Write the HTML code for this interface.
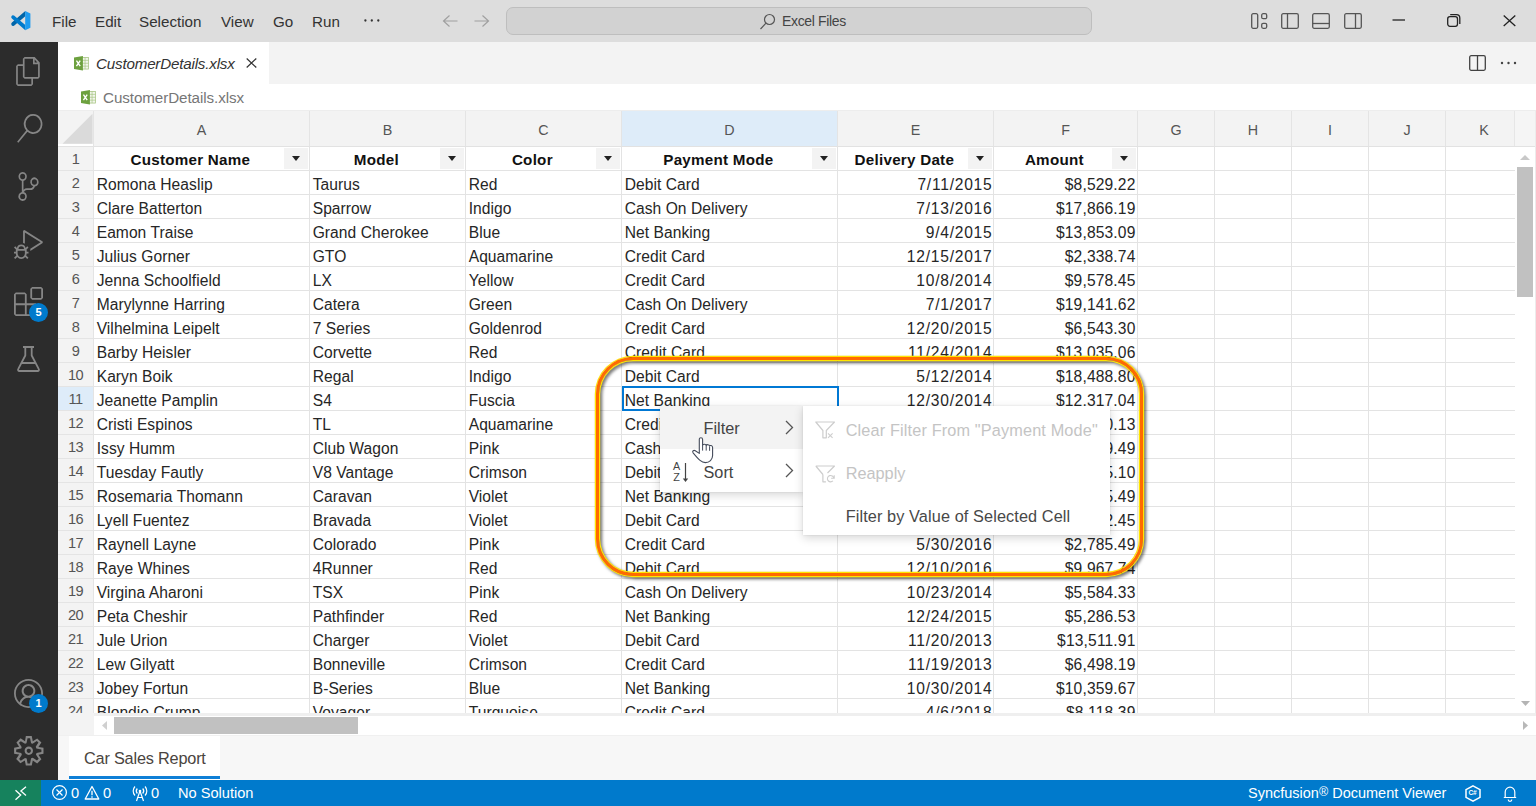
<!DOCTYPE html>
<html lang="en">
<head>
<meta charset="utf-8">
<title>CustomerDetails.xlsx - Excel Files</title>
<style>
*{box-sizing:border-box;margin:0;padding:0}
html,body{width:1536px;height:806px;overflow:hidden;background:#fff}
body{position:relative;font-family:"Liberation Sans",sans-serif;color:#333;-webkit-font-smoothing:antialiased}
.abs{position:absolute}
svg{display:block;position:absolute;overflow:visible}
/* title bar */
#title{position:absolute;left:0;top:0;width:1536px;height:42px;background:#dddddd}
#title .m{position:absolute;top:1px;height:42px;line-height:42px;font-size:15.2px;color:#333;white-space:nowrap}
#cc{position:absolute;left:506px;top:7px;width:586px;height:28px;border-radius:7px;background:#d2d2d2;border:1px solid #bebebe}
#cc span{position:absolute;left:275px;top:0;line-height:26px;font-size:14px;letter-spacing:-.35px;color:#444;white-space:nowrap}
/* activity bar */
#act{position:absolute;left:0;top:42px;width:58px;height:738px;background:#2c2c2c}
.badge{position:absolute;width:19px;height:19px;border-radius:50%;background:#007acc;color:#fff;font-size:11px;font-weight:bold;text-align:center;line-height:19px}
/* tabs */
#tabs{position:absolute;left:58px;top:42px;width:1478px;height:42px;background:#f3f3f3}
#tab{position:absolute;left:0;top:0;width:211px;height:42px;background:#fff}
#tab .t{position:absolute;left:38px;top:1px;line-height:42px;font-size:15.2px;font-style:italic;letter-spacing:-.2px;color:#333;white-space:nowrap}
#bc{position:absolute;left:58px;top:84px;width:1478px;height:26px;background:#fff}
#bc .t{position:absolute;left:45px;top:0;line-height:27px;font-size:15.2px;letter-spacing:-.08px;color:#767676;white-space:nowrap}
/* grid */
#grid{position:absolute;left:58px;top:110px;width:1478px;height:625px;background:#fff;overflow:hidden}
.colhdr{position:absolute;left:0;top:0;width:1478px;height:37px;background:#f5f5f5;border-bottom:1px solid #e2e2e2}
.chw{position:absolute;left:0;top:0;width:1457px;height:36px;overflow:hidden;border-right:1px solid #e6e6e6}
.ch{position:absolute;top:0;height:36px;line-height:40.500px;text-align:center;font-size:14.3px;color:#555;border-right:1px solid #e4e4e4;background:#f3f3f3}
.ch.sel{background:#deecf9}
.rows{position:absolute;left:0;top:0;width:1457px;height:603px;overflow:hidden}
.row{position:absolute;left:0;width:1457px;height:24px}
.rh{position:absolute;left:0;top:0;width:36px;height:24px;background:#f3f3f3;border-right:1px solid #e4e4e4;border-bottom:1px solid #e4e4e4;text-align:center;font-size:14.600px;line-height:25px;color:#555;letter-spacing:-.5px}
.rh.sel{background:#deecf9}
.c{position:absolute;top:0;height:24px;border-right:1px solid #e3e3e3;border-bottom:1px solid #e3e3e3;font-size:15.600px;line-height:27.500px;padding:0 3px 0 2.700px;white-space:nowrap;overflow:hidden;color:#262626;letter-spacing:.05px}
.c.r{text-align:right;padding-right:1.500px;letter-spacing:.15px}
.c.d{text-align:right;padding-right:.6px;letter-spacing:.75px}
.c.hd{line-height:25px;font-weight:bold;text-align:center;padding-right:25px;color:#111;letter-spacing:.25px;font-size:15.2px}
.fb{position:absolute;right:1px;top:1px;width:24px;height:21px;background:#f3f3f3}
.fb:after{content:"";position:absolute;left:7.500px;top:8px;border-left:4.500px solid transparent;border-right:4.500px solid transparent;border-top:5.500px solid #222}

</style>
</head>
<body>
<!-- TITLE BAR -->
<div id="title">
  <svg style="left:0;top:0" width="42" height="42" viewBox="0 0 42 42"><path d="M25.300 10.900V16.200L14 25.650Q12.500 26.600 11.600 25.300 10.600 23.900 11.900 22.600z" fill="#0065a9"/><path d="M25.300 30.300V25L14 15.550Q12.500 14.600 11.600 15.900 10.600 17.300 11.900 18.600z" fill="#007acc"/><path d="M25.200 10.900 30.400 13.400V27.700L25.200 30.300z" fill="#1f9cf0"/></svg>
  <div class="m" style="left:52px">File</div>
  <div class="m" style="left:95px">Edit</div>
  <div class="m" style="left:139px">Selection</div>
  <div class="m" style="left:221px">View</div>
  <div class="m" style="left:273px">Go</div>
  <div class="m" style="left:312px">Run</div>
  <svg style="left:363px;top:18px" width="18" height="5" viewBox="0 0 18 5"><circle cx="2.400" cy="2.500" r="1.150" fill="#333"/><circle cx="8.800" cy="2.500" r="1.150" fill="#333"/><circle cx="15.300" cy="2.500" r="1.150" fill="#333"/></svg>
  <svg style="left:442px;top:14px" width="16" height="14" viewBox="0 0 16 14"><path d="M7.500 1.500 1.500 7l6 5.500M1.500 7h14" fill="none" stroke="#a0a0a0" stroke-width="1.200"/></svg>
  <svg style="left:474px;top:14px" width="16" height="14" viewBox="0 0 16 14"><path d="M8.500 1.500 14.500 7l-6 5.500M14.500 7H.5" fill="none" stroke="#a0a0a0" stroke-width="1.200"/></svg>
  <div id="cc">
    <svg style="left:252px;top:5px" width="17" height="17" viewBox="0 0 17 17"><circle cx="10.500" cy="6.500" r="5" fill="none" stroke="#555" stroke-width="1.200"/><path d="M7 10.200 1.500 16" stroke="#555" stroke-width="1.200" fill="none"/></svg>
    <span>Excel Files</span>
  </div>
  <!-- layout icons -->
  <svg style="left:1251px;top:13px" width="17" height="16" viewBox="0 0 17 16"><rect x=".7" y=".7" width="6" height="14.600" rx="1.500" fill="none" stroke="#555" stroke-width="1.300"/><rect x="10.700" y=".7" width="5" height="5" rx="1.500" fill="none" stroke="#555" stroke-width="1.300"/><rect x="10.700" y="10.300" width="5" height="5" rx="1.500" fill="none" stroke="#555" stroke-width="1.300"/></svg>
  <svg style="left:1281px;top:13px" width="18" height="16" viewBox="0 0 18 16"><rect x=".7" y=".7" width="16.600" height="14.600" rx="1.500" fill="none" stroke="#555" stroke-width="1.300"/><path d="M6.500.7v14.600" stroke="#555" stroke-width="1.300"/></svg>
  <svg style="left:1312px;top:13px" width="18" height="16" viewBox="0 0 18 16"><rect x=".7" y=".7" width="16.600" height="14.600" rx="1.500" fill="none" stroke="#555" stroke-width="1.300"/><path d="M.7 10.500h16.600" stroke="#555" stroke-width="1.300"/></svg>
  <svg style="left:1344px;top:13px" width="18" height="16" viewBox="0 0 18 16"><rect x=".7" y=".7" width="16.600" height="14.600" rx="1.500" fill="none" stroke="#555" stroke-width="1.300"/><path d="M11.500.7v14.600" stroke="#555" stroke-width="1.300"/></svg>
  <!-- window controls -->
  <svg style="left:1392px;top:19px" width="14" height="2" viewBox="0 0 14 2"><path d="M.5 1h12.500" stroke="#222" stroke-width="1.300"/></svg>
  <svg style="left:1447px;top:14px" width="14" height="13" viewBox="0 0 14 13"><rect x=".7" y="2.700" width="9.800" height="9.600" rx="2.200" fill="none" stroke="#222" stroke-width="1.300"/><path d="M3.200.7h6.300a3.300 3.300 0 0 1 3.300 3.300v6" fill="none" stroke="#222" stroke-width="1.300"/></svg>
  <svg style="left:1503px;top:15px" width="13" height="12" viewBox="0 0 13 12"><path d="M.7.5 12.300 11M12.300.5.7 11" stroke="#222" stroke-width="1.300" fill="none"/></svg>
</div>

<!-- ACTIVITY BAR -->
<div id="act">
<svg style="left:15px;top:15px" width="27" height="29" viewBox="0 0 24 24" preserveAspectRatio="none"><path fill="#868686" d="M17.500 0h-9L7 1.500V6H2.500L1 7.500v15.070L2.500 24h12.070L16 22.570V18h4.700l1.300-1.430V4.500L17.500 0zm0 2.120l2.380 2.380H17.500V2.120zm-3 20.380h-12v-15H7v9.070L8.500 18h6v4.500zm6-6h-12v-15H16V6h4.500v10.500z"/></svg>
<svg style="left:16px;top:72px" width="27" height="29" viewBox="0 0 24 24" preserveAspectRatio="none"><path fill="#868686" d="M15.250 0a8.250 8.250 0 0 0-6.180 13.720L1 22.880l1.120 1 8.050-9.120A8.251 8.251 0 1 0 15.250.01V0zm0 15a6.750 6.750 0 1 1 0-13.500 6.750 6.750 0 0 1 0 13.500z"/></svg>
<svg style="left:15px;top:130px" width="27" height="29" viewBox="0 0 24 24" preserveAspectRatio="none"><path fill="#868686" d="M21.007 8.222A3.738 3.738 0 0 0 15.045 5.200a3.737 3.737 0 0 0 1.156 6.583 2.988 2.988 0 0 1-2.668 1.670h-2.990a4.456 4.456 0 0 0-2.989 1.165V7.400a3.737 3.737 0 1 0-1.494 0v9.117a3.776 3.776 0 1 0 1.816.099 2.990 2.990 0 0 1 2.668-1.667h2.990a4.484 4.484 0 0 0 4.223-3.039 3.736 3.736 0 0 0 3.250-3.687zM4.565 3.738a2.242 2.242 0 1 1 4.484 0 2.242 2.242 0 0 1-4.484 0zm4.484 16.441a2.242 2.242 0 1 1-4.484 0 2.242 2.242 0 0 1 4.484 0zm8.221-9.715a2.242 2.242 0 1 1 0-4.485 2.242 2.242 0 0 1 0 4.485z"/></svg>
<svg style="left:14px;top:188px" width="29" height="29" viewBox="0 0 24 24" preserveAspectRatio="none"><path fill="#868686" d="M10.940 13.500l-1.320 1.320a3.730 3.730 0 0 0-7.240 0L1.060 13.500 0 14.560l1.720 1.720-.22.22V18H0v1.500h1.500v.08c.077.489.214.966.41 1.420L0 22.940 1.060 24l1.650-1.650A4.308 4.308 0 0 0 6 24a4.310 4.310 0 0 0 3.290-1.650L10.940 24 12 22.940 10.090 21c.198-.464.336-.951.41-1.450v-.1H12V18h-1.500v-1.500l-.22-.22L12 14.560l-1.060-1.060zM6 13.500a2.250 2.250 0 0 1 2.250 2.250h-4.500A2.250 2.250 0 0 1 6 13.500zm3 6a3.330 3.330 0 0 1-3 3 3.330 3.330 0 0 1-3-3v-2.250h6v2.250zm14.760-9.900v1.260L13.500 17.370V15.600l8.500-5.370L9 2v9.460a5.070 5.070 0 0 0-1.500-.72V.63L8.640 0l15.120 9.600z"/></svg>
<svg style="left:14px;top:245px" width="29" height="29" viewBox="0 0 24 24" preserveAspectRatio="none"><path fill="#868686" d="M13.500 1.500L15 0h7.500L24 1.500V9l-1.500 1.500H15L13.500 9V1.500zm1.500 0V9h7.500V1.500H15zM0 15V6l1.500-1.500H9L10.500 6v7.500H18l1.500 1.500v7.500L18 24H1.500L0 22.500V15zm9-1.500V6H1.500v7.500H9zM9 15H1.500v7.500H9V15zm1.500 7.500H18V15h-7.500v7.500z"/></svg>
<div class="badge" style="left:29px;top:261px">5</div>
<svg style="left:17px;top:304px" width="23" height="26" viewBox="0 0 23 26"><path fill="none" stroke="#868686" stroke-width="1.800" stroke-linejoin="round" d="M6 1h11M8.300 1v8.500L1.200 23.200a1.200 1.200 0 0 0 1.100 1.800h18.400a1.200 1.200 0 0 0 1.100-1.800L14.700 9.500V1M4.500 17h14"/></svg>
<svg style="left:14px;top:637px" width="29" height="29" viewBox="0 0 16 16"><path fill="#868686" d="M16 7.992C16 3.580 12.416 0 8 0S0 3.580 0 7.992c0 2.430 1.104 4.620 2.832 6.090.016.016.032.016.032.032.144.112.288.224.448.336.080.048.144.111.224.175A7.980 7.980 0 0 0 8.016 16a7.980 7.980 0 0 0 4.480-1.375c.080-.048.144-.111.224-.160.144-.111.304-.223.448-.335.016-.016.032-.016.032-.032 1.696-1.487 2.800-3.676 2.800-6.106zm-8 7.001c-1.504 0-2.880-.480-4.016-1.279.016-.128.048-.255.080-.383a4.170 4.170 0 0 1 .416-.991c.176-.304.384-.576.640-.816.240-.240.528-.463.816-.639.304-.176.624-.304.976-.400A4.150 4.150 0 0 1 8 10.342a4.185 4.185 0 0 1 2.928 1.166c.368.368.656.800.864 1.295.112.288.192.592.240.911A7.030 7.030 0 0 1 8 14.993zm-2.448-7.400a2.490 2.490 0 0 1-.208-1.024c0-.351.064-.703.208-1.023.144-.320.336-.607.576-.847.240-.240.528-.431.848-.575.320-.144.672-.208 1.024-.208.368 0 .704.064 1.024.208.320.144.608.336.848.575.240.240.432.528.576.847.144.320.208.672.208 1.023 0 .368-.064.704-.208 1.023a2.840 2.840 0 0 1-.576.848 2.840 2.840 0 0 1-.848.575 2.715 2.715 0 0 1-2.064 0 2.840 2.840 0 0 1-.848-.575 2.526 2.526 0 0 1-.560-.848zm7.424 5.306c0-.032-.016-.048-.016-.080a5.220 5.220 0 0 0-.688-1.406 4.883 4.883 0 0 0-1.088-1.135 5.207 5.207 0 0 0-1.040-.608 2.820 2.820 0 0 0 .464-.383 4.200 4.200 0 0 0 .624-.784 3.624 3.624 0 0 0 .528-1.934 3.710 3.710 0 0 0-.288-1.470 3.799 3.799 0 0 0-.816-1.199 3.845 3.845 0 0 0-1.200-.800 3.720 3.720 0 0 0-1.472-.287 3.720 3.720 0 0 0-1.472.288 3.631 3.631 0 0 0-1.200.815 3.840 3.840 0 0 0-.800 1.199 3.710 3.710 0 0 0-.288 1.470c0 .352.048.688.144 1.007.096.336.224.640.400.927.160.288.384.544.624.784.144.144.304.271.480.383a5.120 5.120 0 0 0-1.040.624c-.416.320-.784.703-1.088 1.119a4.999 4.999 0 0 0-.688 1.406c-.016.032-.016.064-.016.080C1.776 11.636.992 9.910.992 7.992.992 4.140 4.144.991 8 .991s7.008 3.149 7.008 7.001a6.960 6.960 0 0 1-2.032 4.907z"/></svg>
<div class="badge" style="left:29px;top:652px">1</div>
<svg style="left:12.200px;top:692.300px" width="33.600" height="33.600" viewBox="0 0 16 16"><path fill="#868686" fill-rule="evenodd" d="M9.100 4.400L8.600 2H7.400l-.5 2.400-.7.3-2-1.300-.9.800 1.300 2-.2.700-2.400.5v1.200l2.400.5.300.8-1.300 2 .8.800 2-1.300.8.300.4 2.300h1.200l.5-2.400.8-.3 2 1.300.8-.8-1.300-2 .3-.8 2.300-.4V7.400l-2.400-.5-.3-.8 1.300-2-.8-.8-2 1.300-.7-.2zM9.400 1l.5 2.400L12 2.100l2 2-1.400 2.100 2.400.4v2.800l-2.400.5L14 12l-2 2-2.100-1.400-.5 2.400H6.600l-.5-2.400L4 13.900l-2-2 1.400-2.100L1 9.400V6.600l2.400-.5L2.100 4l2-2 2.100 1.400.4-2.400h2.800zm.6 7c0 1.100-.9 2-2 2s-2-.9-2-2 .9-2 2-2 2 .9 2 2zM8 9c.6 0 1-.4 1-1s-.4-1-1-1-1 .4-1 1 .4 1 1 1z"/></svg>

</div>

<!-- TABS -->
<div id="tabs">
  <div id="tab">
    <svg style="left:15.500px;top:14px" width="15" height="14.500" viewBox="0 0 16 15" preserveAspectRatio="none"><rect x="8" y="1.500" width="7.500" height="12" fill="#f2f6ec" stroke="#a5c480" stroke-width=".8"/><path d="M8 4.500h7.500M8 7.500h7.500M8 10.500h7.500M11.800 1.500v12" stroke="#a5c480" stroke-width=".7" fill="none"/><path d="M0 1.600 9.500 0v15L0 13.400z" fill="#6da13f"/><path d="M2.600 4.800 6.600 10.400M6.600 4.800 2.600 10.400" stroke="#fff" stroke-width="1.500" fill="none"/></svg>

    <div class="t">CustomerDetails.xlsx</div>
    <svg style="left:188px;top:16px" width="11" height="10" viewBox="0 0 11 10"><path d="M.7.5 10.300 9.500M10.300.5.7 9.500" stroke="#333" stroke-width="1.200" fill="none"/></svg>
  </div>
  <svg style="left:1411px;top:13px" width="17" height="16" viewBox="0 0 17 16"><rect x=".7" y=".7" width="15.600" height="14.600" rx="1.500" fill="none" stroke="#424242" stroke-width="1.300"/><path d="M8.500.7v14.600" stroke="#424242" stroke-width="1.300"/></svg>
  <svg style="left:1442px;top:19px" width="17" height="4" viewBox="0 0 17 4"><circle cx="2" cy="2" r="1.200" fill="#424242"/><circle cx="8.500" cy="2" r="1.200" fill="#424242"/><circle cx="15" cy="2" r="1.200" fill="#424242"/></svg>
</div>
<div id="bc">
  <svg style="left:23px;top:5.500px" width="15" height="14.500" viewBox="0 0 16 15" preserveAspectRatio="none"><rect x="8" y="1.500" width="7.500" height="12" fill="#f2f6ec" stroke="#a5c480" stroke-width=".8"/><path d="M8 4.500h7.500M8 7.500h7.500M8 10.500h7.500M11.800 1.500v12" stroke="#a5c480" stroke-width=".7" fill="none"/><path d="M0 1.600 9.500 0v15L0 13.400z" fill="#6da13f"/><path d="M2.600 4.800 6.600 10.400M6.600 4.800 2.600 10.400" stroke="#fff" stroke-width="1.500" fill="none"/></svg>

  <div class="t">CustomerDetails.xlsx</div>
</div>

<!-- GRID -->
<div id="grid">
<div class="colhdr"><div class="chw">
<div class="ch" style="left:36px;width:216px">A</div>
<div class="ch" style="left:252px;width:156px">B</div>
<div class="ch" style="left:408px;width:156px">C</div>
<div class="ch sel" style="left:564px;width:216px">D</div>
<div class="ch" style="left:780px;width:156px">E</div>
<div class="ch" style="left:936px;width:144px">F</div>
<div class="ch" style="left:1080px;width:77px">G</div>
<div class="ch" style="left:1157px;width:77px">H</div>
<div class="ch" style="left:1234px;width:77px">I</div>
<div class="ch" style="left:1311px;width:77px">J</div>
<div class="ch" style="left:1388px;width:77px">K</div>
</div></div>
<div class="rows">
<div class="row" style="top:37px">
<div class="rh">1</div>
<div class="c hd" style="left:36px;width:216px"><span>Customer Name</span><i class="fb"></i></div>
<div class="c hd" style="left:252px;width:156px"><span>Model</span><i class="fb"></i></div>
<div class="c hd" style="left:408px;width:156px"><span>Color</span><i class="fb"></i></div>
<div class="c hd" style="left:564px;width:216px"><span>Payment Mode</span><i class="fb"></i></div>
<div class="c hd" style="left:780px;width:156px"><span>Delivery Date</span><i class="fb"></i></div>
<div class="c hd" style="left:936px;width:144px"><span>Amount</span><i class="fb"></i></div>
<div class="c" style="left:1080px;width:77px"></div>
<div class="c" style="left:1157px;width:77px"></div>
<div class="c" style="left:1234px;width:77px"></div>
<div class="c" style="left:1311px;width:77px"></div>
<div class="c" style="left:1388px;width:77px"></div>
</div>
<div class="row" style="top:61px">
<div class="rh">2</div>
<div class="c" style="left:36px;width:216px">Romona Heaslip</div>
<div class="c" style="left:252px;width:156px">Taurus</div>
<div class="c" style="left:408px;width:156px">Red</div>
<div class="c" style="left:564px;width:216px">Debit Card</div>
<div class="c d" style="left:780px;width:156px">7/11/2015</div>
<div class="c r" style="left:936px;width:144px">$8,529.22</div>
<div class="c" style="left:1080px;width:77px"></div>
<div class="c" style="left:1157px;width:77px"></div>
<div class="c" style="left:1234px;width:77px"></div>
<div class="c" style="left:1311px;width:77px"></div>
<div class="c" style="left:1388px;width:77px"></div>
</div>
<div class="row" style="top:85px">
<div class="rh">3</div>
<div class="c" style="left:36px;width:216px">Clare Batterton</div>
<div class="c" style="left:252px;width:156px">Sparrow</div>
<div class="c" style="left:408px;width:156px">Indigo</div>
<div class="c" style="left:564px;width:216px">Cash On Delivery</div>
<div class="c d" style="left:780px;width:156px">7/13/2016</div>
<div class="c r" style="left:936px;width:144px">$17,866.19</div>
<div class="c" style="left:1080px;width:77px"></div>
<div class="c" style="left:1157px;width:77px"></div>
<div class="c" style="left:1234px;width:77px"></div>
<div class="c" style="left:1311px;width:77px"></div>
<div class="c" style="left:1388px;width:77px"></div>
</div>
<div class="row" style="top:109px">
<div class="rh">4</div>
<div class="c" style="left:36px;width:216px">Eamon Traise</div>
<div class="c" style="left:252px;width:156px">Grand Cherokee</div>
<div class="c" style="left:408px;width:156px">Blue</div>
<div class="c" style="left:564px;width:216px">Net Banking</div>
<div class="c d" style="left:780px;width:156px">9/4/2015</div>
<div class="c r" style="left:936px;width:144px">$13,853.09</div>
<div class="c" style="left:1080px;width:77px"></div>
<div class="c" style="left:1157px;width:77px"></div>
<div class="c" style="left:1234px;width:77px"></div>
<div class="c" style="left:1311px;width:77px"></div>
<div class="c" style="left:1388px;width:77px"></div>
</div>
<div class="row" style="top:133px">
<div class="rh">5</div>
<div class="c" style="left:36px;width:216px">Julius Gorner</div>
<div class="c" style="left:252px;width:156px">GTO</div>
<div class="c" style="left:408px;width:156px">Aquamarine</div>
<div class="c" style="left:564px;width:216px">Credit Card</div>
<div class="c d" style="left:780px;width:156px">12/15/2017</div>
<div class="c r" style="left:936px;width:144px">$2,338.74</div>
<div class="c" style="left:1080px;width:77px"></div>
<div class="c" style="left:1157px;width:77px"></div>
<div class="c" style="left:1234px;width:77px"></div>
<div class="c" style="left:1311px;width:77px"></div>
<div class="c" style="left:1388px;width:77px"></div>
</div>
<div class="row" style="top:157px">
<div class="rh">6</div>
<div class="c" style="left:36px;width:216px">Jenna Schoolfield</div>
<div class="c" style="left:252px;width:156px">LX</div>
<div class="c" style="left:408px;width:156px">Yellow</div>
<div class="c" style="left:564px;width:216px">Credit Card</div>
<div class="c d" style="left:780px;width:156px">10/8/2014</div>
<div class="c r" style="left:936px;width:144px">$9,578.45</div>
<div class="c" style="left:1080px;width:77px"></div>
<div class="c" style="left:1157px;width:77px"></div>
<div class="c" style="left:1234px;width:77px"></div>
<div class="c" style="left:1311px;width:77px"></div>
<div class="c" style="left:1388px;width:77px"></div>
</div>
<div class="row" style="top:181px">
<div class="rh">7</div>
<div class="c" style="left:36px;width:216px">Marylynne Harring</div>
<div class="c" style="left:252px;width:156px">Catera</div>
<div class="c" style="left:408px;width:156px">Green</div>
<div class="c" style="left:564px;width:216px">Cash On Delivery</div>
<div class="c d" style="left:780px;width:156px">7/1/2017</div>
<div class="c r" style="left:936px;width:144px">$19,141.62</div>
<div class="c" style="left:1080px;width:77px"></div>
<div class="c" style="left:1157px;width:77px"></div>
<div class="c" style="left:1234px;width:77px"></div>
<div class="c" style="left:1311px;width:77px"></div>
<div class="c" style="left:1388px;width:77px"></div>
</div>
<div class="row" style="top:205px">
<div class="rh">8</div>
<div class="c" style="left:36px;width:216px">Vilhelmina Leipelt</div>
<div class="c" style="left:252px;width:156px">7 Series</div>
<div class="c" style="left:408px;width:156px">Goldenrod</div>
<div class="c" style="left:564px;width:216px">Credit Card</div>
<div class="c d" style="left:780px;width:156px">12/20/2015</div>
<div class="c r" style="left:936px;width:144px">$6,543.30</div>
<div class="c" style="left:1080px;width:77px"></div>
<div class="c" style="left:1157px;width:77px"></div>
<div class="c" style="left:1234px;width:77px"></div>
<div class="c" style="left:1311px;width:77px"></div>
<div class="c" style="left:1388px;width:77px"></div>
</div>
<div class="row" style="top:229px">
<div class="rh">9</div>
<div class="c" style="left:36px;width:216px">Barby Heisler</div>
<div class="c" style="left:252px;width:156px">Corvette</div>
<div class="c" style="left:408px;width:156px">Red</div>
<div class="c" style="left:564px;width:216px">Credit Card</div>
<div class="c d" style="left:780px;width:156px">11/24/2014</div>
<div class="c r" style="left:936px;width:144px">$13,035.06</div>
<div class="c" style="left:1080px;width:77px"></div>
<div class="c" style="left:1157px;width:77px"></div>
<div class="c" style="left:1234px;width:77px"></div>
<div class="c" style="left:1311px;width:77px"></div>
<div class="c" style="left:1388px;width:77px"></div>
</div>
<div class="row" style="top:253px">
<div class="rh">10</div>
<div class="c" style="left:36px;width:216px">Karyn Boik</div>
<div class="c" style="left:252px;width:156px">Regal</div>
<div class="c" style="left:408px;width:156px">Indigo</div>
<div class="c" style="left:564px;width:216px">Debit Card</div>
<div class="c d" style="left:780px;width:156px">5/12/2014</div>
<div class="c r" style="left:936px;width:144px">$18,488.80</div>
<div class="c" style="left:1080px;width:77px"></div>
<div class="c" style="left:1157px;width:77px"></div>
<div class="c" style="left:1234px;width:77px"></div>
<div class="c" style="left:1311px;width:77px"></div>
<div class="c" style="left:1388px;width:77px"></div>
</div>
<div class="row" style="top:277px">
<div class="rh sel">11</div>
<div class="c" style="left:36px;width:216px">Jeanette Pamplin</div>
<div class="c" style="left:252px;width:156px">S4</div>
<div class="c" style="left:408px;width:156px">Fuscia</div>
<div class="c" style="left:564px;width:216px">Net Banking</div>
<div class="c d" style="left:780px;width:156px">12/30/2014</div>
<div class="c r" style="left:936px;width:144px">$12,317.04</div>
<div class="c" style="left:1080px;width:77px"></div>
<div class="c" style="left:1157px;width:77px"></div>
<div class="c" style="left:1234px;width:77px"></div>
<div class="c" style="left:1311px;width:77px"></div>
<div class="c" style="left:1388px;width:77px"></div>
</div>
<div class="row" style="top:301px">
<div class="rh">12</div>
<div class="c" style="left:36px;width:216px">Cristi Espinos</div>
<div class="c" style="left:252px;width:156px">TL</div>
<div class="c" style="left:408px;width:156px">Aquamarine</div>
<div class="c" style="left:564px;width:216px">Credit Card</div>
<div class="c d" style="left:780px;width:156px">12/18/2013</div>
<div class="c r" style="left:936px;width:144px">$6,710.13</div>
<div class="c" style="left:1080px;width:77px"></div>
<div class="c" style="left:1157px;width:77px"></div>
<div class="c" style="left:1234px;width:77px"></div>
<div class="c" style="left:1311px;width:77px"></div>
<div class="c" style="left:1388px;width:77px"></div>
</div>
<div class="row" style="top:325px">
<div class="rh">13</div>
<div class="c" style="left:36px;width:216px">Issy Humm</div>
<div class="c" style="left:252px;width:156px">Club Wagon</div>
<div class="c" style="left:408px;width:156px">Pink</div>
<div class="c" style="left:564px;width:216px">Cash On Delivery</div>
<div class="c d" style="left:780px;width:156px">2/2/2015</div>
<div class="c r" style="left:936px;width:144px">$13,229.49</div>
<div class="c" style="left:1080px;width:77px"></div>
<div class="c" style="left:1157px;width:77px"></div>
<div class="c" style="left:1234px;width:77px"></div>
<div class="c" style="left:1311px;width:77px"></div>
<div class="c" style="left:1388px;width:77px"></div>
</div>
<div class="row" style="top:349px">
<div class="rh">14</div>
<div class="c" style="left:36px;width:216px">Tuesday Fautly</div>
<div class="c" style="left:252px;width:156px">V8 Vantage</div>
<div class="c" style="left:408px;width:156px">Crimson</div>
<div class="c" style="left:564px;width:216px">Debit Card</div>
<div class="c d" style="left:780px;width:156px">11/19/2013</div>
<div class="c r" style="left:936px;width:144px">$9,885.10</div>
<div class="c" style="left:1080px;width:77px"></div>
<div class="c" style="left:1157px;width:77px"></div>
<div class="c" style="left:1234px;width:77px"></div>
<div class="c" style="left:1311px;width:77px"></div>
<div class="c" style="left:1388px;width:77px"></div>
</div>
<div class="row" style="top:373px">
<div class="rh">15</div>
<div class="c" style="left:36px;width:216px">Rosemaria Thomann</div>
<div class="c" style="left:252px;width:156px">Caravan</div>
<div class="c" style="left:408px;width:156px">Violet</div>
<div class="c" style="left:564px;width:216px">Net Banking</div>
<div class="c d" style="left:780px;width:156px">2/8/2014</div>
<div class="c r" style="left:936px;width:144px">$8,055.49</div>
<div class="c" style="left:1080px;width:77px"></div>
<div class="c" style="left:1157px;width:77px"></div>
<div class="c" style="left:1234px;width:77px"></div>
<div class="c" style="left:1311px;width:77px"></div>
<div class="c" style="left:1388px;width:77px"></div>
</div>
<div class="row" style="top:397px">
<div class="rh">16</div>
<div class="c" style="left:36px;width:216px">Lyell Fuentez</div>
<div class="c" style="left:252px;width:156px">Bravada</div>
<div class="c" style="left:408px;width:156px">Violet</div>
<div class="c" style="left:564px;width:216px">Debit Card</div>
<div class="c d" style="left:780px;width:156px">8/5/2016</div>
<div class="c r" style="left:936px;width:144px">$9,052.45</div>
<div class="c" style="left:1080px;width:77px"></div>
<div class="c" style="left:1157px;width:77px"></div>
<div class="c" style="left:1234px;width:77px"></div>
<div class="c" style="left:1311px;width:77px"></div>
<div class="c" style="left:1388px;width:77px"></div>
</div>
<div class="row" style="top:421px">
<div class="rh">17</div>
<div class="c" style="left:36px;width:216px">Raynell Layne</div>
<div class="c" style="left:252px;width:156px">Colorado</div>
<div class="c" style="left:408px;width:156px">Pink</div>
<div class="c" style="left:564px;width:216px">Credit Card</div>
<div class="c d" style="left:780px;width:156px">5/30/2016</div>
<div class="c r" style="left:936px;width:144px">$2,785.49</div>
<div class="c" style="left:1080px;width:77px"></div>
<div class="c" style="left:1157px;width:77px"></div>
<div class="c" style="left:1234px;width:77px"></div>
<div class="c" style="left:1311px;width:77px"></div>
<div class="c" style="left:1388px;width:77px"></div>
</div>
<div class="row" style="top:445px">
<div class="rh">18</div>
<div class="c" style="left:36px;width:216px">Raye Whines</div>
<div class="c" style="left:252px;width:156px">4Runner</div>
<div class="c" style="left:408px;width:156px">Red</div>
<div class="c" style="left:564px;width:216px">Debit Card</div>
<div class="c d" style="left:780px;width:156px">12/10/2016</div>
<div class="c r" style="left:936px;width:144px">$9,967.74</div>
<div class="c" style="left:1080px;width:77px"></div>
<div class="c" style="left:1157px;width:77px"></div>
<div class="c" style="left:1234px;width:77px"></div>
<div class="c" style="left:1311px;width:77px"></div>
<div class="c" style="left:1388px;width:77px"></div>
</div>
<div class="row" style="top:469px">
<div class="rh">19</div>
<div class="c" style="left:36px;width:216px">Virgina Aharoni</div>
<div class="c" style="left:252px;width:156px">TSX</div>
<div class="c" style="left:408px;width:156px">Pink</div>
<div class="c" style="left:564px;width:216px">Cash On Delivery</div>
<div class="c d" style="left:780px;width:156px">10/23/2014</div>
<div class="c r" style="left:936px;width:144px">$5,584.33</div>
<div class="c" style="left:1080px;width:77px"></div>
<div class="c" style="left:1157px;width:77px"></div>
<div class="c" style="left:1234px;width:77px"></div>
<div class="c" style="left:1311px;width:77px"></div>
<div class="c" style="left:1388px;width:77px"></div>
</div>
<div class="row" style="top:493px">
<div class="rh">20</div>
<div class="c" style="left:36px;width:216px">Peta Cheshir</div>
<div class="c" style="left:252px;width:156px">Pathfinder</div>
<div class="c" style="left:408px;width:156px">Red</div>
<div class="c" style="left:564px;width:216px">Net Banking</div>
<div class="c d" style="left:780px;width:156px">12/24/2015</div>
<div class="c r" style="left:936px;width:144px">$5,286.53</div>
<div class="c" style="left:1080px;width:77px"></div>
<div class="c" style="left:1157px;width:77px"></div>
<div class="c" style="left:1234px;width:77px"></div>
<div class="c" style="left:1311px;width:77px"></div>
<div class="c" style="left:1388px;width:77px"></div>
</div>
<div class="row" style="top:517px">
<div class="rh">21</div>
<div class="c" style="left:36px;width:216px">Jule Urion</div>
<div class="c" style="left:252px;width:156px">Charger</div>
<div class="c" style="left:408px;width:156px">Violet</div>
<div class="c" style="left:564px;width:216px">Debit Card</div>
<div class="c d" style="left:780px;width:156px">11/20/2013</div>
<div class="c r" style="left:936px;width:144px">$13,511.91</div>
<div class="c" style="left:1080px;width:77px"></div>
<div class="c" style="left:1157px;width:77px"></div>
<div class="c" style="left:1234px;width:77px"></div>
<div class="c" style="left:1311px;width:77px"></div>
<div class="c" style="left:1388px;width:77px"></div>
</div>
<div class="row" style="top:541px">
<div class="rh">22</div>
<div class="c" style="left:36px;width:216px">Lew Gilyatt</div>
<div class="c" style="left:252px;width:156px">Bonneville</div>
<div class="c" style="left:408px;width:156px">Crimson</div>
<div class="c" style="left:564px;width:216px">Credit Card</div>
<div class="c d" style="left:780px;width:156px">11/19/2013</div>
<div class="c r" style="left:936px;width:144px">$6,498.19</div>
<div class="c" style="left:1080px;width:77px"></div>
<div class="c" style="left:1157px;width:77px"></div>
<div class="c" style="left:1234px;width:77px"></div>
<div class="c" style="left:1311px;width:77px"></div>
<div class="c" style="left:1388px;width:77px"></div>
</div>
<div class="row" style="top:565px">
<div class="rh">23</div>
<div class="c" style="left:36px;width:216px">Jobey Fortun</div>
<div class="c" style="left:252px;width:156px">B-Series</div>
<div class="c" style="left:408px;width:156px">Blue</div>
<div class="c" style="left:564px;width:216px">Net Banking</div>
<div class="c d" style="left:780px;width:156px">10/30/2014</div>
<div class="c r" style="left:936px;width:144px">$10,359.67</div>
<div class="c" style="left:1080px;width:77px"></div>
<div class="c" style="left:1157px;width:77px"></div>
<div class="c" style="left:1234px;width:77px"></div>
<div class="c" style="left:1311px;width:77px"></div>
<div class="c" style="left:1388px;width:77px"></div>
</div>
<div class="row" style="top:589px">
<div class="rh">24</div>
<div class="c" style="left:36px;width:216px">Blondie Crump</div>
<div class="c" style="left:252px;width:156px">Voyager</div>
<div class="c" style="left:408px;width:156px">Turquoise</div>
<div class="c" style="left:564px;width:216px">Credit Card</div>
<div class="c d" style="left:780px;width:156px">4/6/2018</div>
<div class="c r" style="left:936px;width:144px">$8,118.39</div>
<div class="c" style="left:1080px;width:77px"></div>
<div class="c" style="left:1157px;width:77px"></div>
<div class="c" style="left:1234px;width:77px"></div>
<div class="c" style="left:1311px;width:77px"></div>
<div class="c" style="left:1388px;width:77px"></div>
</div>
</div>
<div class="abs" style="left:0;top:0;width:36px;height:37px;background:#f3f3f3;border-right:1px solid #e4e4e4;border-bottom:1px solid #e2e2e2"></div>
<div class="abs" style="left:0;top:34px;width:35px;height:2px;background:#fff"></div>
<svg style="left:0;top:0" width="36" height="36" viewBox="0 0 36 36"><path d="M4.500 33.750h30V3.750z" fill="#dadada"/></svg>
<!-- vertical scrollbar -->
<div class="abs" style="left:1457px;top:37px;width:21px;height:566px;background:#fff"></div>
<div class="abs" style="left:1459px;top:57px;width:16.400px;height:130px;background:#c1c1c1"></div>
<svg style="left:1462px;top:45px" width="10" height="5" viewBox="0 0 10 5"><path d="M0 5h10L5 0z" fill="#c8c8c8"/></svg>
<svg style="left:1462.700px;top:590.500px" width="9" height="5" viewBox="0 0 9 5"><path d="M0 0h9L4.500 5z" fill="#b4b4b4"/></svg>
<div class="abs" style="left:1477px;top:0;width:1px;height:625px;background:#ececec"></div>
<!-- bottom strip + horizontal scrollbar -->
<div class="abs" style="left:0;top:603px;width:1478px;height:3px;background:#efefef"></div>
<div class="abs" style="left:0;top:606px;width:1478px;height:19px;background:#fff"></div>
<div class="abs" style="left:0;top:603px;width:36px;height:22px;background:#f3f3f3"></div>
<div class="abs" style="left:56px;top:607.300px;width:244px;height:16.400px;background:#c1c1c1"></div>
<svg style="left:44px;top:610.500px" width="5" height="9" viewBox="0 0 5 9"><path d="M5 0v9L0 4.500z" fill="#d0d0d0"/></svg>
<svg style="left:1465px;top:611.300px" width="5" height="9" viewBox="0 0 5 9"><path d="M0 0v9L5 4.500z" fill="#b8b8b8"/></svg>
<div class="abs" style="left:0;top:0;width:1478px;height:1px;background:#ededed"></div><!-- top-hairline -->

</div>

<!-- SHEET TABS -->
<div class="abs" style="left:58px;top:735px;width:1478px;height:45px;background:#f7f7f7;border-top:1px solid #f0f0f0"></div>
<div class="abs" style="left:69px;top:736px;width:151px;height:44px;background:#fff">
  <div class="abs" style="left:15px;top:0;line-height:44px;font-size:16.300px;letter-spacing:-.2px;color:#4a4440;white-space:nowrap">Car Sales Report</div>
  <div class="abs" style="left:0;top:40px;width:151px;height:2.600px;background:#0f7fd6"></div>
</div>
<!-- STATUS BAR -->
<div id="status" class="abs" style="left:0;top:779.500px;width:1536px;height:27px;background:#007acc;color:#fff;font-size:14.600px;line-height:26px;white-space:nowrap">
  <div class="abs" style="left:0;top:0;width:41px;height:27px;background:#16825d"></div>
  <svg style="left:14px;top:7px" width="14" height="14" viewBox="0 0 14 14"><path d="M1.500 3.200 6.700 8 1.500 12.700M12 -.3 6.900 4.100 12 8.500" fill="none" stroke="#fff" stroke-width="1.300"/></svg>
  <svg style="left:50.500px;top:4.800px" width="17" height="17" viewBox="0 0 17 17"><circle cx="8.500" cy="8.500" r="6.900" fill="none" stroke="#fff" stroke-width="1.200"/><path d="M5.500 5.500l6 6M11.500 5.500l-6 6" stroke="#fff" stroke-width="1.200" fill="none"/></svg>
  <div class="abs" style="left:71px;top:0">0</div>
  <svg style="left:83.500px;top:5px" width="16" height="15" viewBox="0 0 16 15"><path d="M8 1.500 14.800 14H1.200z" fill="none" stroke="#fff" stroke-width="1.300" stroke-linejoin="round"/><path d="M8 5.800v4.400M8 11.200v1.500" stroke="#fff" stroke-width="1.300"/></svg>
  <div class="abs" style="left:103px;top:0">0</div>
  <svg style="left:132px;top:5px" width="16" height="17" viewBox="0 0 16 17"><path d="M3 1.500a6.500 6.500 0 0 0 0 9M13 1.500a6.500 6.500 0 0 1 0 9M5.300 3.500a3.800 3.800 0 0 0 0 5M10.700 3.500a3.800 3.800 0 0 1 0 5M8 6 4.500 16M8 6l3.500 10M5.800 12.500h4.400" fill="none" stroke="#fff" stroke-width="1.200"/><circle cx="8" cy="6" r="1.300" fill="#fff"/></svg>
  <div class="abs" style="left:151px;top:0">0</div>
  <div class="abs" style="left:178px;top:0;letter-spacing:0">No Solution</div>
  <div class="abs" style="left:1248px;top:0;font-size:14.500px">Syncfusion<span style="font-size:12.500px;position:relative;top:-1.500px">®</span> Document Viewer</div>
  <svg style="left:1465px;top:5px" width="16" height="17" viewBox="0 0 16 17"><path d="M8 .8 15 4.700v7.600L8 16.200 1 12.300V4.700z" fill="none" stroke="#fff" stroke-width="1.500"/></svg>
  <div class="abs" style="left:1468.500px;top:0;font-size:6.500px;font-weight:bold;letter-spacing:-.3px">C#</div>
  <svg style="left:1503px;top:5px" width="14" height="17" viewBox="0 0 14 17"><path d="M2.200 12.500V7a4.800 4.800 0 0 1 9.600 0v5.500M.8 12.500h12.400M5.200 14.500a1.800 1.800 0 0 0 3.600 0" fill="none" stroke="#fff" stroke-width="1.200"/></svg>
</div>

<!-- active cell -->
<div class="abs" style="left:621.500px;top:386px;width:217px;height:24.500px;border:2px solid #0078d4"></div>
<!-- context menu -->
<div id="cm" class="abs" style="left:659.500px;top:406px;width:143px;height:86px;background:#fff;box-shadow:0 3px 9px rgba(0,0,0,.16),0 0 2px rgba(0,0,0,.10);font-size:16.300px;color:#444;white-space:nowrap">
  <div class="abs" style="left:0;top:0;width:143px;height:43px;background:#f3f3f3"></div>
  <div class="abs" style="left:44px;top:0;line-height:44px">Filter</div>
  <div class="abs" style="left:44px;top:43.600px;line-height:44px">Sort</div>
  <svg style="left:125px;top:14px" width="9" height="15" viewBox="0 0 9 15"><path d="M1 1l6.500 6.500L1 14" fill="none" stroke="#555" stroke-width="1.300"/></svg>
  <svg style="left:125px;top:57px" width="9" height="15" viewBox="0 0 9 15"><path d="M1 1l6.500 6.500L1 14" fill="none" stroke="#555" stroke-width="1.300"/></svg>
  <svg style="left:13px;top:56px" width="18" height="21" viewBox="0 0 18 21"><text x="0" y="8.300" font-family="Liberation Sans, sans-serif" font-size="10.800" fill="#444">A</text><text x="0.300" y="19.300" font-family="Liberation Sans, sans-serif" font-size="10.800" fill="#444">Z</text><path d="M12.500 1v17" stroke="#444" stroke-width="1.200" fill="none"/><path d="M9.800 16.500h5.400l-2.700 3.500z" fill="#444"/></svg>
</div>
<div id="sm" class="abs" style="left:803px;top:406.400px;width:306.500px;height:129px;background:#fff;box-shadow:0 3px 9px rgba(0,0,0,.16),0 0 2px rgba(0,0,0,.10);font-size:16.300px;color:#444;white-space:nowrap">
  <div class="abs" style="left:42.700px;top:1.200px;line-height:45px;color:#c4c4c4;letter-spacing:.14px">Clear Filter From "Payment Mode"</div>
  <div class="abs" style="left:42.700px;top:44.200px;line-height:45px;color:#c4c4c4">Reapply</div>
  <div class="abs" style="left:42.700px;top:87.200px;line-height:45px;color:#484848;letter-spacing:.1px">Filter by Value of Selected Cell</div>
  <svg style="left:12px;top:15px" width="21" height="18" viewBox="0 0 21 18"><path d="M.8 1h18.700L11.300 9.500v7.300H7.900V9.500z" fill="none" stroke="#cdcdcd" stroke-width="1.200" stroke-linejoin="round"/><path d="M13 12.300l4.600 4.600M17.600 12.300l-4.600 4.600" stroke="#cdcdcd" stroke-width="1.100" fill="none"/></svg>
  <svg style="left:12px;top:58.500px" width="21" height="18" viewBox="0 0 21 18"><path d="M.8 1h18.700L12.500 8M7.900 9.500v7.300h3M7.900 9.500.8 1" fill="none" stroke="#cdcdcd" stroke-width="1.200" stroke-linejoin="round"/><path d="M18.800 13.300a3.200 3.200 0 1 0-.9 2.600M19.200 10.200v3.100h-3.100" stroke="#cdcdcd" stroke-width="1.100" fill="none"/></svg>
</div>
<!-- cursor -->
<svg style="left:692px;top:436.500px" width="22" height="28" viewBox="0 0 22 28"><path d="M7.300 16.400V2.400a1.650 1.650 0 0 1 3.300 0V8.400c.2-1.600 3.400-1.600 3.600.2.200-1.400 3.200-1.200 3.400.6.200-1.200 3-.9 3 1.400V18.600c0 4-3.200 7-7.200 7-4 0-6.200-2.500-12.300-9.800-1.200-1.600.6-3.100 2.200-2.100z" fill="#fff" stroke="#444b5a" stroke-width="1.100" stroke-linejoin="round"/><path d="M10.600 8.400v5.200M14.200 8.800v4.800M17.600 9.600v4.200" stroke="#444b5a" stroke-width="1" fill="none"/></svg>
<!-- highlight callout -->
<div class="abs" style="left:596px;top:357px;width:547px;height:219px;border:3px solid #ff6a00;border-radius:37px;box-shadow:0 0 0 1.200px #ffe500,inset 0 0 0 1.200px #ffe500;filter:drop-shadow(2.500px 2.500px 1.800px rgba(0,0,0,.55))"></div>

</body>
</html>
